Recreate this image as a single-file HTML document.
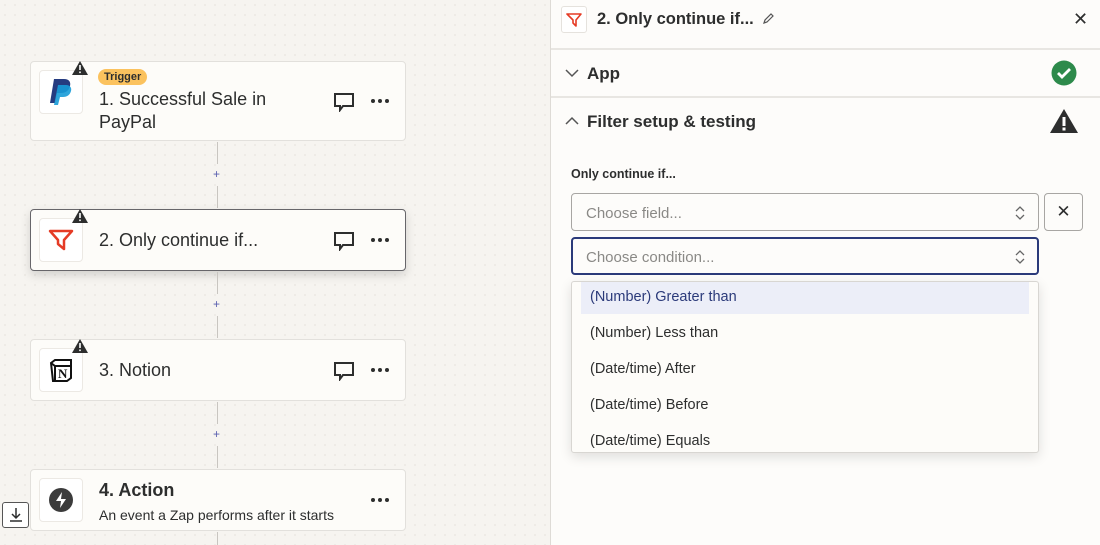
<!DOCTYPE html><html><head><style>
*{box-sizing:border-box;margin:0;padding:0}
body{width:1100px;height:545px;overflow:hidden;font-family:"Liberation Sans",sans-serif;background:#f7f5f1;position:relative;color:#2d2e2e}
.canvas{position:absolute;left:0;top:0;width:550px;height:545px;background-color:#f6f4f0;background-image:radial-gradient(#ebe8e2 1px,transparent 1px);background-size:10px 10px}
.card{position:absolute;left:30px;width:376px;background:#fdfcf9;border:1px solid #e2e0dc;border-radius:4px}
.ic{position:absolute;left:8px;width:44px;height:44px;border:1px solid #ece9e4;border-radius:4px;background:#fff;display:flex;align-items:center;justify-content:center}
.warn{position:absolute;left:40px;top:-2px}
.t{position:absolute;left:68px;font-size:18px;color:#2d2e2e}
.dots{position:absolute;right:16px}
.cm{position:absolute;right:51px}
.line{position:absolute;left:217px;width:1px;background:#c8c5c0}
.plus{position:absolute;left:213px;font-size:12px;color:#5a5fb0}
.panel{position:absolute;left:550px;top:0;width:550px;height:545px;background:#fdfcfa;border-left:1px solid #dedbd6}
.hr{position:absolute;left:0;width:550px;height:2px;background:#e8e6e2}
.sel{position:absolute;left:20px;width:468px;height:38px;border:1px solid #a8a6a3;border-radius:4px;font-size:15px;color:#8a8986;padding:11px 14px;background:#fdfcfa}
.sel svg{position:absolute;right:12px;top:11px}
.opt{position:absolute;left:18px;font-size:14.5px;color:#2d2e2e}
</style></head><body>
<div class="canvas">
<div class="card" style="top:61px;height:80px">
 <div class="ic" style="top:8px"><svg width="26" height="30" viewBox="0 0 26 30"><path d="M6 2h10c5 0 7 3 6 7-1 5-5 7-9 7h-4l-2 10H2z" fill="#253b80"/><path d="M10 8h8c4 0 6 3 5 6-1 4-4 6-8 6h-3l-2 8H6z" fill="#179bd7" opacity=".9"/></svg></div>
 <svg class="warn" width="18" height="16" viewBox="0 0 18 16"><path d="M9 1L17 15H1z" fill="#2d2e2e"/><rect x="8.2" y="5" width="1.6" height="5" fill="#fff"/><rect x="8.2" y="11.5" width="1.6" height="1.6" fill="#fff"/></svg>
 <div style="position:absolute;left:67px;top:7px;background:#fbc25e;border-radius:8px;font-size:11px;font-weight:bold;padding:2px 6px;color:#2d2e2e">Trigger</div>
 <div class="t" style="top:26px;line-height:23px">1. Successful Sale in<br>PayPal</div>
 <svg class="cm" style="top:30px" width="20" height="20" viewBox="0 0 20 20"><path d="M1 2h18v12H9l-3 4v-4H1z" fill="none" stroke="#2d2e2e" stroke-width="2"/></svg>
 <svg class="dots" style="top:37px" width="18" height="4" viewBox="0 0 18 4"><circle cx="2" cy="2" r="2" fill="#2d2e2e"/><circle cx="9" cy="2" r="2" fill="#2d2e2e"/><circle cx="16" cy="2" r="2" fill="#2d2e2e"/></svg>
</div>
<div class="line" style="top:142px;height:22px"></div><div class="plus" style="top:167px">+</div><div class="line" style="top:186px;height:22px"></div>
<div class="card" style="top:209px;height:62px;border-color:#67666a;box-shadow:0 4px 10px rgba(0,0,0,.15)">
 <div class="ic" style="top:8px"><svg width="26" height="24" viewBox="0 0 26 24"><path d="M2 3h22l-8 9v9l-6-5v-4z" fill="none" stroke="#e53b25" stroke-width="2.5" stroke-linejoin="round"/></svg></div>
 <svg class="warn" width="18" height="16" viewBox="0 0 18 16"><path d="M9 1L17 15H1z" fill="#2d2e2e"/><rect x="8.2" y="5" width="1.6" height="5" fill="#fff"/><rect x="8.2" y="11.5" width="1.6" height="1.6" fill="#fff"/></svg>
 <div class="t" style="top:20px">2. Only continue if...</div>
 <svg class="cm" style="top:21px" width="20" height="20" viewBox="0 0 20 20"><path d="M1 2h18v12H9l-3 4v-4H1z" fill="none" stroke="#2d2e2e" stroke-width="2"/></svg>
 <svg class="dots" style="top:28px" width="18" height="4" viewBox="0 0 18 4"><circle cx="2" cy="2" r="2" fill="#2d2e2e"/><circle cx="9" cy="2" r="2" fill="#2d2e2e"/><circle cx="16" cy="2" r="2" fill="#2d2e2e"/></svg>
</div>
<div class="line" style="top:272px;height:22px"></div><div class="plus" style="top:297px">+</div><div class="line" style="top:316px;height:22px"></div>
<div class="card" style="top:339px;height:62px">
 <div class="ic" style="top:8px"><svg width="26" height="26" viewBox="0 0 26 26"><path d="M3 6l4-3h16v18l-4 3H5z" fill="#fff" stroke="#111" stroke-width="2"/><path d="M3 6l4 3h16M7 9v15" fill="none" stroke="#111" stroke-width="2"/><text x="10" y="21" font-family="Liberation Serif" font-weight="bold" font-size="13" fill="#111">N</text></svg></div>
 <svg class="warn" width="18" height="16" viewBox="0 0 18 16"><path d="M9 1L17 15H1z" fill="#2d2e2e"/><rect x="8.2" y="5" width="1.6" height="5" fill="#fff"/><rect x="8.2" y="11.5" width="1.6" height="1.6" fill="#fff"/></svg>
 <div class="t" style="top:20px">3. Notion</div>
 <svg class="cm" style="top:21px" width="20" height="20" viewBox="0 0 20 20"><path d="M1 2h18v12H9l-3 4v-4H1z" fill="none" stroke="#2d2e2e" stroke-width="2"/></svg>
 <svg class="dots" style="top:28px" width="18" height="4" viewBox="0 0 18 4"><circle cx="2" cy="2" r="2" fill="#2d2e2e"/><circle cx="9" cy="2" r="2" fill="#2d2e2e"/><circle cx="16" cy="2" r="2" fill="#2d2e2e"/></svg>
</div>
<div class="line" style="top:402px;height:22px"></div><div class="plus" style="top:427px">+</div><div class="line" style="top:446px;height:22px"></div>
<div class="card" style="top:469px;height:62px">
 <div class="ic" style="top:8px"><svg width="26" height="26" viewBox="0 0 26 26"><circle cx="13" cy="13" r="12" fill="#3b3b3b"/><path d="M14 5l-6 9h5l-1 7 6-9h-5z" fill="#fff"/></svg></div>
 <div class="t" style="top:10px;font-weight:bold">4. Action</div>
 <div style="position:absolute;left:68px;top:37px;font-size:14px">An event a Zap performs after it starts</div>
 <svg class="dots" style="top:28px" width="18" height="4" viewBox="0 0 18 4"><circle cx="2" cy="2" r="2" fill="#2d2e2e"/><circle cx="9" cy="2" r="2" fill="#2d2e2e"/><circle cx="16" cy="2" r="2" fill="#2d2e2e"/></svg>
</div>
<div class="line" style="top:532px;height:13px"></div>
<div style="position:absolute;left:2px;top:502px;width:27px;height:26px;border:1px solid #555;border-radius:3px;background:#fff;display:flex;align-items:center;justify-content:center"><svg width="16" height="16" viewBox="0 0 16 16"><path d="M8 1v10M4 7l4 4 4-4M2 14h12" fill="none" stroke="#2d2e2e" stroke-width="1.5"/></svg></div>
</div>
<div class="panel">
 <div style="position:absolute;left:10px;top:6px;width:26px;height:27px;border:1px solid #e5e2dd;border-radius:3px;background:#fff;display:flex;align-items:center;justify-content:center"><svg width="16" height="16" viewBox="0 0 16 16"><path d="M1 2h14l-5 6v6l-3-3V8z" fill="none" stroke="#e53b25" stroke-width="1.6" stroke-linejoin="round"/></svg></div>
 <div style="position:absolute;left:46px;top:10px;font-size:16.5px;font-weight:bold">2. Only continue if...</div>
 <svg style="position:absolute;left:211px;top:13px" width="12" height="12" viewBox="0 0 12 12"><path d="M2 10l1-3 6-6 2 2-6 6z" fill="none" stroke="#555" stroke-width="1.2"/></svg>
 <div style="position:absolute;left:522px;top:9px;font-size:18px">✕</div>
 <div class="hr" style="top:48px"></div>
 <svg style="position:absolute;left:14px;top:68px" width="14" height="10" viewBox="0 0 14 10"><path d="M1 2l6 6 6-6" fill="none" stroke="#555" stroke-width="1.5"/></svg>
 <div style="position:absolute;left:36px;top:64px;font-size:17px;font-weight:bold">App</div>
 <svg style="position:absolute;left:500px;top:60px" width="26" height="26" viewBox="0 0 26 26"><circle cx="13" cy="13" r="12.5" fill="#2d8a4b"/><path d="M7 13l4 4 8-8" fill="none" stroke="#fff" stroke-width="2.8"/></svg>
 <div class="hr" style="top:96px"></div>
 <svg style="position:absolute;left:14px;top:116px" width="14" height="10" viewBox="0 0 14 10"><path d="M1 8l6-6 6 6" fill="none" stroke="#555" stroke-width="1.5"/></svg>
 <div style="position:absolute;left:36px;top:112px;font-size:17px;font-weight:bold">Filter setup &amp; testing</div>
 <svg style="position:absolute;left:498px;top:108px" width="30" height="26" viewBox="0 0 30 26"><path d="M15 1L29 25H1z" fill="#2d2e2e"/><rect x="13.5" y="9" width="3" height="9" fill="#fff"/><rect x="13.5" y="19.5" width="3" height="3" fill="#fff"/></svg>
 <div style="position:absolute;left:20px;top:167px;font-size:12.5px;font-weight:bold">Only continue if...</div>
 <div class="sel" style="top:193px">Choose field...<svg width="12" height="16" viewBox="0 0 12 16"><path d="M2 6l4-4 4 4M2 10l4 4 4-4" fill="none" stroke="#666" stroke-width="1.3"/></svg></div>
 <div style="position:absolute;left:493px;top:193px;width:39px;height:38px;border:1px solid #a8a6a3;border-radius:4px;text-align:center;font-size:17px;line-height:36px">✕</div>
 <div class="sel" style="top:237px;border:2px solid #2b3a7a;padding:10px 13px">Choose condition...<svg width="12" height="16" viewBox="0 0 12 16" style="right:11px;top:10px"><path d="M2 6l4-4 4 4M2 10l4 4 4-4" fill="none" stroke="#666" stroke-width="1.3"/></svg></div>
 <div style="position:absolute;left:20px;top:281px;width:468px;height:172px;background:#fdfcf9;border:1px solid #d8d6d2;border-radius:3px;box-shadow:0 4px 12px rgba(0,0,0,.12);overflow:hidden">
  <div style="position:absolute;left:9px;top:0;width:448px;height:32px;background:#eceef8"></div>
  <div class="opt" style="top:7px;color:#2b3a7a">(Number) Greater than</div>
  <div class="opt" style="top:43px">(Number) Less than</div>
  <div class="opt" style="top:79px">(Date/time) After</div>
  <div class="opt" style="top:115px">(Date/time) Before</div>
  <div class="opt" style="top:151px">(Date/time) Equals</div>
 </div>
</div>
</body></html>
